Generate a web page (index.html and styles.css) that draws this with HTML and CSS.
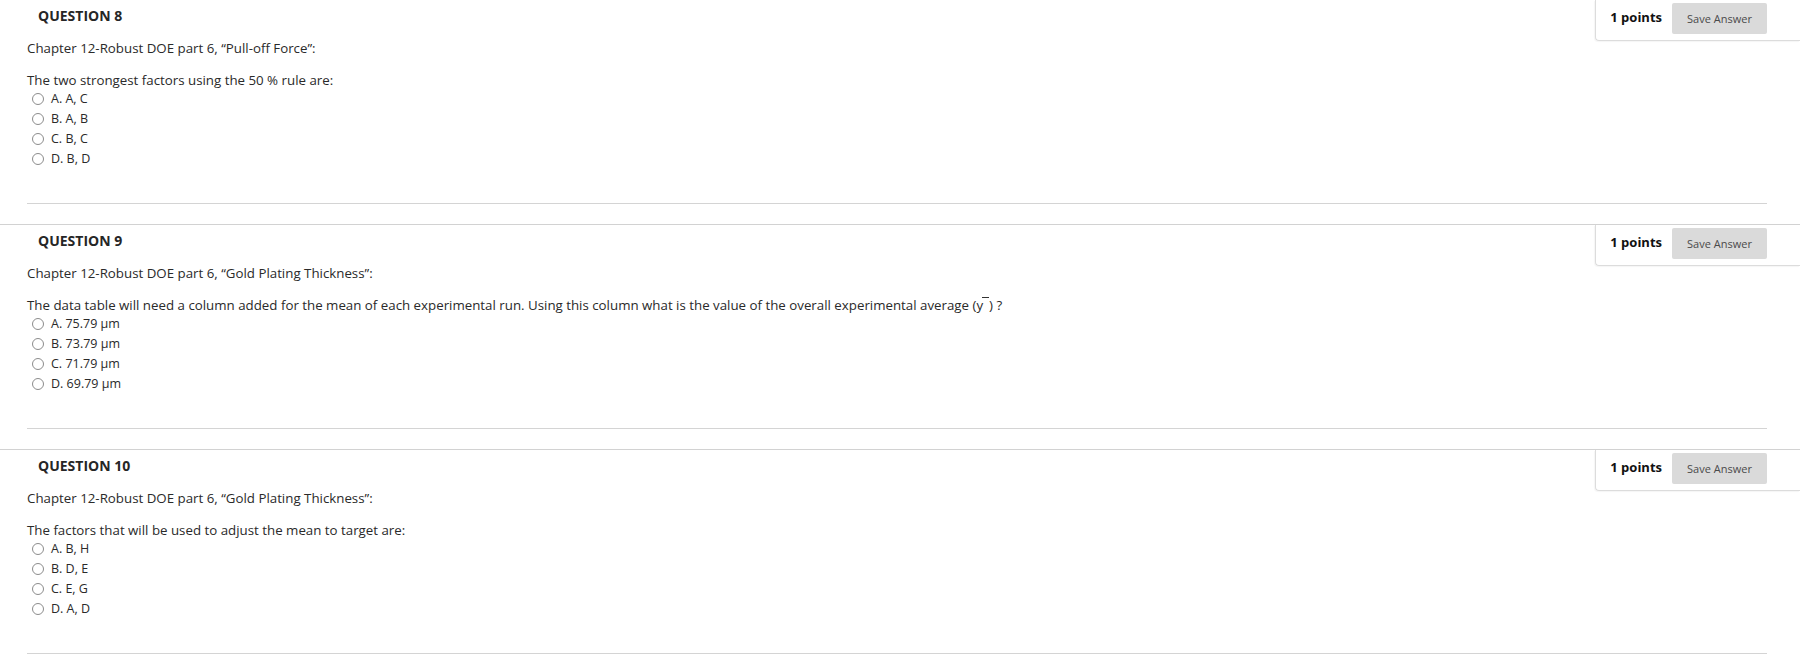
FILE: index.html
```html
<!DOCTYPE html>
<html>
<head>
<meta charset="utf-8">
<link rel="stylesheet" href="styles.css">
</head>
<body>
<div class="page">
  <section class="q">
    <div class="q-head">
      <h3 class="q-title">QUESTION 8</h3>
      <div class="q-meta"><span class="pts">1 points</span><button class="save">Save Answer</button></div>
    </div>
    <div class="q-body">
      <p class="chapter">Chapter 12-Robust DOE part 6, “Pull-off Force”:</p>
      <p class="prompt">The two strongest factors using the 50 % rule are:</p>
      <ul class="opts">
        <li><span class="radio"></span>A. A, C</li>
        <li><span class="radio"></span>B. A, B</li>
        <li><span class="radio"></span>C. B, C</li>
        <li><span class="radio"></span>D. B, D</li>
      </ul>
    </div>
    <hr class="q-end">
  </section>
  <section class="q">
    <div class="q-head">
      <h3 class="q-title">QUESTION 9</h3>
      <div class="q-meta"><span class="pts">1 points</span><button class="save">Save Answer</button></div>
    </div>
    <div class="q-body">
      <p class="chapter">Chapter 12-Robust DOE part 6, “Gold Plating Thickness”:</p>
      <p class="prompt">The data table will need a column added for the mean of each experimental run. Using this column what is the value of the overall experimental average (y<span class="bar"></span>) ?</p>
      <ul class="opts">
        <li><span class="radio"></span>A. 75.79 μm</li>
        <li><span class="radio"></span>B. 73.79 μm</li>
        <li><span class="radio"></span>C. 71.79 μm</li>
        <li><span class="radio"></span>D. 69.79 μm</li>
      </ul>
    </div>
    <hr class="q-end">
  </section>
  <section class="q">
    <div class="q-head">
      <h3 class="q-title">QUESTION 10</h3>
      <div class="q-meta"><span class="pts">1 points</span><button class="save">Save Answer</button></div>
    </div>
    <div class="q-body">
      <p class="chapter">Chapter 12-Robust DOE part 6, “Gold Plating Thickness”:</p>
      <p class="prompt">The factors that will be used to adjust the mean to target are:</p>
      <ul class="opts">
        <li><span class="radio"></span>A. B, H</li>
        <li><span class="radio"></span>B. D, E</li>
        <li><span class="radio"></span>C. E, G</li>
        <li><span class="radio"></span>D. A, D</li>
      </ul>
    </div>
    <hr class="q-end">
  </section>
</div>
</body>
</html>
```
FILE: styles.css
```css
html, body {
  margin: 0;
  padding: 0;
  background: #fff;
}
body {
  font-family: "Open Sans", "Noto Sans", sans-serif;
  color: #2a2a2a;
  font-size: 13px;
}
.page {
  margin-top: -1px;
}
.q {
  border-top: 1px solid #d2d2d2;
}
.q-head {
  display: flex;
  justify-content: space-between;
  align-items: flex-start;
  height: 41px;
}
.q-title {
  margin: 6px 0 0 38px;
  font-size: 14px;
  line-height: 19px;
  font-weight: 700;
  color: #262626;
}
.q-meta {
  display: flex;
  align-items: center;
  gap: 10px;
  padding: 3px 33px 6px 14px;
  border-left: 1px solid #dcdcdc;
  border-bottom: 1px solid #dcdcdc;
  border-bottom-left-radius: 4px;
  box-shadow: -1px 1px 1px rgba(0,0,0,0.04);
}
.pts {
  font-weight: 700;
  font-size: 13px;
  color: #111;
  margin-top: -3px;
}
.save {
  width: 95px;
  height: 31px;
  border: none;
  border-radius: 2px;
  background: #dadada;
  color: #4a4a4a;
  font-family: "Open Sans", "Noto Sans", sans-serif;
  font-size: 11px;
  padding: 0;
}
.q-body {
  padding-left: 27px;
}
.chapter {
  margin: 0;
  line-height: 14px;
  font-size: 13.3px;
}
.prompt {
  margin: 16px 0 0;
  line-height: 18px;
  font-size: 13.3px;
}
.bar {
  display: inline-block;
  width: 7px;
  height: 12px;
  border-top: 1px solid #333;
  vertical-align: baseline;
  margin-left: -1px;
}
.opts {
  list-style: none;
  margin: 0;
  padding: 0;
}
.opts li {
  display: flex;
  align-items: center;
  height: 20px;
  line-height: 20px;
  font-size: 12.5px;
}
.radio {
  display: inline-block;
  box-sizing: border-box;
  width: 12px;
  height: 12px;
  border: 1px solid #8c8c8c;
  border-radius: 50%;
  margin: 0 7px 0 5px;
}
.q-end {
  border: 0;
  border-top: 1px solid #d4d4d4;
  margin: 34px 33px 20px 27px;
  height: 0;
}
```
